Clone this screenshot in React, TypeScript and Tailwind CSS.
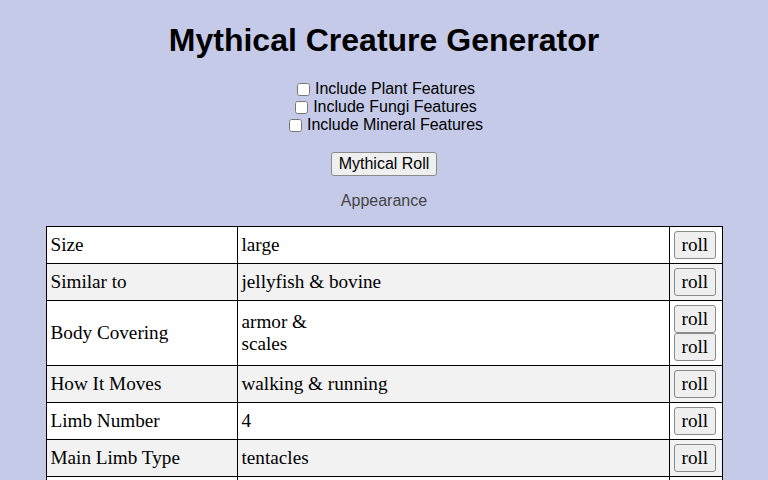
import React from "react";

const rows: { label: string; values: string[]; rolls: number }[] = [
  { label: "Size", values: ["large"], rolls: 1 },
  { label: "Similar to", values: ["jellyfish & bovine"], rolls: 1 },
  { label: "Body Covering", values: ["armor &", "scales"], rolls: 2 },
  { label: "How It Moves", values: ["walking & running"], rolls: 1 },
  { label: "Limb Number", values: ["4"], rolls: 1 },
  { label: "Main Limb Type", values: ["tentacles"], rolls: 1 },
  { label: "Secondary Limb Type", values: ["wings"], rolls: 1 },
  { label: "Head Shape", values: ["round"], rolls: 1 },
];

export default function App() {
  return (
    <div
      className="min-h-[480px] w-full bg-[#c5cae9] text-center text-black text-[16px] pb-8"
      style={{ fontFamily: '"Liberation Sans", Arial, sans-serif' }}
    >
      <h1 className="pt-[22px] pb-[21px] text-[32px] leading-[37px] font-bold">
        Mythical Creature Generator
      </h1>
      <div className="flex flex-col items-center">
        {["Include Plant Features", "Include Fungi Features", "Include Mineral Features"].map((t) => (
          <label key={t} className="flex items-center leading-[18px] h-[18px]">
            <input type="checkbox" className="w-[13px] h-[13px] ml-[4px] mr-[5px]" />
            <span>{t}</span>
          </label>
        ))}
      </div>
      <div className="mt-[18px]">
        <button className="bg-[#efefef] border border-[#8a8a8a] rounded-[3px] px-[7px] py-[3px] leading-[16px] text-[16px] text-black">
          Mythical Roll
        </button>
      </div>
      <div className="mt-[16px] leading-[18px] text-[#444]">Appearance</div>
      <table
        className="mt-[16px] mx-auto w-[676px] border-collapse text-left text-[19.2px] table-fixed"
        style={{ fontFamily: '"Liberation Serif", "Times New Roman", serif' }}
      >
        <colgroup>
          <col style={{ width: 191 }} />
          <col style={{ width: 432 }} />
          <col style={{ width: 53 }} />
        </colgroup>
        <tbody>
          {rows.map((r, i) => (
            <tr key={r.label} className={i % 2 === 1 ? "bg-[#f2f2f2]" : "bg-white"}>
              <td className="border border-black px-[4px] py-[4px] leading-[22px] align-middle">{r.label}</td>
              <td className="border border-black px-[4px] py-[4px] leading-[22px] align-middle">
                {r.values.map((v) => (
                  <div key={v}>{v}</div>
                ))}
              </td>
              <td className="border border-black px-[4px] py-[4px] align-middle">
                <div className="flex flex-col items-start">
                  {Array.from({ length: r.rolls }).map((_, k) => (
                    <button
                      key={k}
                      className="bg-[#efefef] border border-[#8a8a8a] rounded-[3px] px-[7px] py-[2px] leading-[22px] text-[19.2px] text-black"
                    >
                      roll
                    </button>
                  ))}
                </div>
              </td>
            </tr>
          ))}
        </tbody>
      </table>
    </div>
  );
}
